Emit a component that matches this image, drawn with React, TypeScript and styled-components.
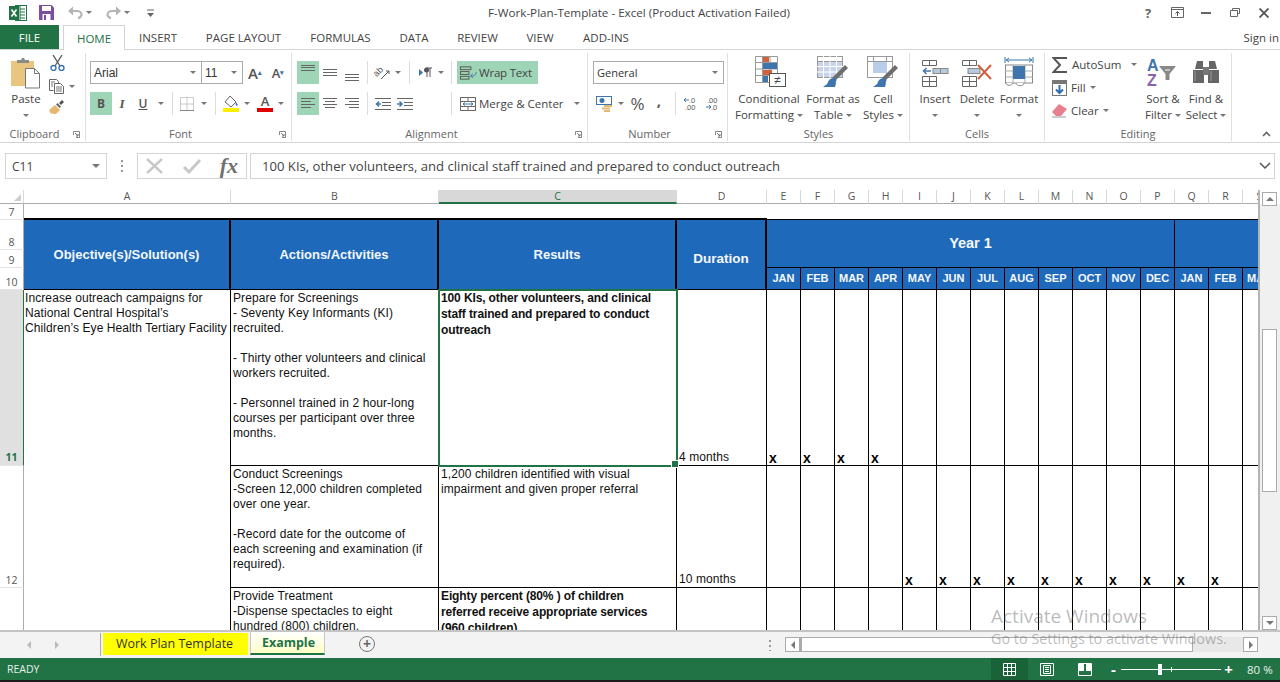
import React from "react";
import styled, { createGlobalStyle, css } from "styled-components";

const Global = createGlobalStyle`
  html, body { margin: 0; padding: 0; background: #fff; overflow: hidden; }
  * { box-sizing: border-box; }
  #root { width: 1280px; height: 682px; }
`;
const UI = `"Open Sans", "Noto Sans", sans-serif`;
const GREEN = "#217346";
const ACTIVE = "#9fd5b7";
const BLUE = "#1f69bb";

const Window = styled.div`
  position: relative; width: 1280px; height: 682px; display: flex; flex-direction: column;
  font-family: ${UI}; color: #444; background: #fff; overflow: hidden; white-space: nowrap;
`;
/* title */
const TitleBar = styled.div`height: 25px; display: flex; align-items: center; position: relative; flex: none;`;
const QuickBtn = styled.span<{ $w: number }>`width: ${p => p.$w}px; display: flex; justify-content: center; align-items: center; flex: none;`;
const HelpBtn = styled(QuickBtn)`font-weight: 700; font-size: 13px; color: #666;`;
const TitleText = styled.div`position: absolute; left: 0; right: 0; top: 5px; text-align: center; font-size: 11.65px; line-height: 16px; color: #444; padding-right: 2px;`;
const WinControls = styled.div`margin-left: auto; display: flex; align-items: center; padding-right: 2px;`;
/* tabs */
const TabBar = styled.div`height: 25px; display: flex; align-items: stretch; flex: none; border-bottom: 1px solid #d4d4d4; position: relative;`;
const FileTab = styled.div`width: 59px; background: ${GREEN}; color: #fff; font-size: 11.5px; display: flex; align-items: center; justify-content: center; margin-right: 4px;`;
const Tab = styled.div<{ $w: number; $active?: boolean }>`
  width: ${p => p.$w}px; font-size: 11.5px; display: flex; align-items: center; justify-content: center; color: #444; height: 25px;
  ${p => p.$active && css`color: ${GREEN}; background: #fff; border: 1px solid #d4d4d4; border-bottom: 0;`}
`;
const SignIn = styled.div`margin-left: auto; font-size: 11.5px; align-self: center; margin-right: 1px; color: #444;`;
/* ribbon */
const Ribbon = styled.div`height: 93px; flex: none; display: flex; padding-top: 3px; border-bottom: 1px solid #d4d4d4; background: #fff;`;
const Group = styled.div<{ $w: number; $last?: boolean }>`
  position: relative; flex: none; width: ${p => p.$w}px; height: 88px; display: flex; flex-direction: column;
  border-right: ${p => (p.$last ? "0" : "1px solid #e0e0e0")};
`;
const GroupBody = styled.div<{ $left?: number; $top?: number; $row?: boolean }>`
  flex: 1; display: flex; flex-direction: ${p => (p.$row ? "row" : "column")};
  padding: ${p => p.$top ?? 8}px 0 0 ${p => p.$left ?? 0}px; min-height: 0;
`;
const GroupLabel = styled.div<{ $launcher?: boolean }>`height: 14px; line-height: 14px; font-size: 11px; color: #666; text-align: center; padding-right: ${p => (p.$launcher ? 16 : 0)}px;`;
const CollapseRow = styled.div`height: 14px; display: flex; justify-content: flex-end; align-items: center; padding-right: 9px;`;
const Launcher = styled.svg`position: absolute; right: 5px; bottom: 3px; width: 7px; height: 7px;`;
const ToolRow = styled.div`display: flex; align-items: center; height: 23px; margin-bottom: 8px;`;
const Tool = styled.div<{ $w: number; $active?: boolean }>`
  flex: none; width: ${p => p.$w}px; height: 23px; display: flex; align-items: center; justify-content: center;
  background: ${p => (p.$active ? ACTIVE : "transparent")}; font-size: 12px; color: #555;
`;
const GrowFont = styled(Tool)<{ $size: number }>`font-size: ${p => p.$size}px; font-weight: 600; align-items: center;`;
const FontMark = styled.sup`font-size: 7px; color: #3f75ad; line-height: 7px;`;
const BoldTool = styled(Tool)`font-weight: 700;`;
const ItalicTool = styled(Tool)`font-style: italic; font-weight: 600; font-family: "Liberation Serif", serif; font-size: 13px;`;
const UnderTool = styled(Tool)`text-decoration: underline; font-weight: 600;`;
const ColorTool = styled(Tool)`flex-direction: column; font-weight: 600; font-size: 13px; line-height: 13px;`;
const PercentTool = styled(Tool)`font-size: 17px;`;
const CommaTool = styled(Tool)`font-weight: 700; font-size: 15px; padding-bottom: 8px;`;
const TextTool = styled(Tool)<{ $tight?: boolean }>`
  justify-content: flex-start; gap: ${p => (p.$tight ? 2 : 3)}px; padding-left: 3px; font-size: 11.5px; color: #444;
  letter-spacing: ${p => (p.$tight ? "-.2px" : "0")};
`;
const Sep = styled.div<{ $w: number }>`flex: none; width: ${p => p.$w}px; height: 23px; display: flex; justify-content: center; &::after { content: ""; width: 1px; background: #dcdcdc; }`;
const Gap = styled.div<{ $w: number }>`flex: none; width: ${p => p.$w}px;`;
const Caret = styled.span<{ $ml?: number; $big?: boolean }>`
  display: inline-block; flex: none; width: 0; height: 0; margin-left: ${p => p.$ml ?? 0}px;
  border-left: ${p => (p.$big ? 4 : 3)}px solid transparent; border-right: ${p => (p.$big ? 4 : 3)}px solid transparent; border-top: ${p => (p.$big ? 4 : 3)}px solid #777;
`;
const Combo = styled.div<{ $w: number; $ml?: number }>`
  flex: none; width: ${p => p.$w}px; margin-left: ${p => p.$ml ?? 0}px; height: 23px; border: 1px solid #ababab; background: #fff; display: flex; align-items: center;
  justify-content: space-between; padding: 0 5px 0 3px; font-size: 11px; color: #333;
`;
const ArialName = styled.span`font-family: "Liberation Sans", Arial, sans-serif; font-size: 12px;`;
const Big = styled.div<{ $w: number }>`flex: none; width: ${p => p.$w}px; display: flex; flex-direction: column; align-items: center;`;
const BigIcon = styled.div<{ $top?: number; $left?: number }>`height: 35px; display: flex; align-items: flex-start; justify-content: center; padding: ${p => p.$top ?? 0}px 0 0 ${p => p.$left ?? 0}px;`;
const BigLine = styled.div`height: 16px; line-height: 16px; font-size: 11.5px; color: #444; display: flex; align-items: center; gap: 3px; justify-content: center;`;
const SmallCol = styled.div<{ $w: number; $ml?: number; $mt?: number }>`flex: none; width: ${p => p.$w}px; margin: ${p => p.$mt ?? 0}px 0 0 ${p => p.$ml ?? 0}px; display: flex; flex-direction: column;`;
const SmallRow = styled.div<{ $h: number; $pt?: number; $pl?: number }>`height: ${p => p.$h}px; display: flex; align-items: center; gap: 4px; font-size: 11.5px; color: #444; padding: ${p => p.$pt ?? 0}px 0 0 ${p => p.$pl ?? 0}px;`;
/* formula */
const FormulaBar = styled.div`height: 47px; flex: none; display: flex; padding-top: 10px; align-items: flex-start; background: #fff;`;
const Box = styled.div<{ $w: number; $ml: number }>`
  flex: none; width: ${p => p.$w}px; margin-left: ${p => p.$ml}px; height: 26px; border: 1px solid #d4d4d4; display: flex; align-items: center; font-size: 12px; color: #444;
`;
const NameBox = styled(Box)`justify-content: space-between; padding: 0 6px;`;
const FxBox = styled(Box)`justify-content: space-between; padding: 0 8px 0 8px;`;
const FormulaBox = styled(Box)`justify-content: space-between; padding: 0 3px 0 11px; font-size: 13.1px;`;
const DragDots = styled.div`flex: none; margin-left: 14px; width: 2px; height: 13px; margin-top: 7px; background: repeating-linear-gradient(#999 0 2px, transparent 2px 5px);`;
const Fx = styled.span`font-family: "Liberation Serif", serif; font-style: italic; font-weight: 700; font-size: 22px; line-height: 22px; color: #707070;`;
/* sheet */
const SheetArea = styled.div`height: 440px; flex: none; display: flex;`;
const SheetClip = styled.div`width: 1258px; height: 440px; overflow: hidden; flex: none;`;
const SheetGrid = styled.div`
  display: grid; width: 1277px; height: 440px;
  grid-template-columns: 24px 207px 208px 238px 90px repeat(15, 34px);
  grid-template-rows: 14px 16px 30px 18px 22px 176px 122px 100px;
  font-family: "Liberation Sans", Arial, sans-serif; font-size: 12px; line-height: 15px; color: #111;
`;
type Pos = { $c: number; $r: number; $cs?: number; $rs?: number };
const place = css<Pos>`
  grid-column: ${p => p.$c} / span ${p => p.$cs ?? 1};
  grid-row: ${p => p.$r} / span ${p => p.$rs ?? 1};
`;
const ColHead = styled.div<Pos & { $sel?: boolean }>`
  ${place}; font-family: ${UI}; font-size: 10.5px; line-height: 13px; text-align: center; color: ${p => (p.$sel ? GREEN : "#555")};
  background: ${p => (p.$sel ? "#d8d8d8" : "#fff")}; border-right: 1px solid #d8d8d8;
  border-bottom: ${p => (p.$sel ? `2px solid ${GREEN}` : "1px solid #ababab")};
`;
const Corner = styled.div`grid-column: 1; grid-row: 1; border-bottom: 1px solid #ababab; border-right: 1px solid #d8d8d8; display: flex; justify-content: flex-end; align-items: flex-end; padding: 0 2px 2px 0;`;
const RowHead = styled.div<Pos & { $sel?: boolean }>`
  ${place}; font-family: ${UI}; font-size: 10.5px; line-height: 14px; text-align: center; display: flex; align-items: flex-end; justify-content: center;
  padding-bottom: ${p => (p.$sel ? 1 : 0)}px;
  background: ${p => (p.$sel ? "#e0e0e0" : "#fff")}; color: ${p => (p.$sel ? GREEN : "#555")}; font-weight: ${p => (p.$sel ? 700 : 400)};
  border-right: 1px solid ${p => (p.$sel ? GREEN : "#ababab")}; border-bottom: 1px solid #e4e4e4;
`;
const Blank = styled.div<Pos>`${place}; background: #fff; border-bottom: 2px solid #000;`;
const ThinBlank = styled.div<Pos>`${place}; background: #fff; border-bottom: 1px solid #000;`;
const HeadCell = styled.div<Pos & { $size?: number; $thick?: boolean; $low?: boolean }>`
  ${place}; background: ${BLUE}; color: #f4f8fc; font-weight: 700; font-size: ${p => p.$size ?? 13}px;
  display: flex; align-items: center; justify-content: center; overflow: hidden; padding-top: ${p => (p.$low ? 8 : 0)}px;
  border-right: ${p => (p.$thick ? "2px" : "1px")} solid #000; border-bottom: 1px solid #000;
`;
const Cell = styled.div<Pos & { $bold?: boolean; $bottom?: boolean; $selected?: boolean; $first?: boolean }>`
  ${place}; position: relative; background: #fff; white-space: pre; overflow: hidden;
  padding: ${p => (p.$bold || p.$bottom ? 0 : 1)}px 2px 0 ${p => (p.$first ? 1 : 2)}px;
  border-right: 1px solid #000; border-bottom: 1px solid #000;
  font-weight: ${p => (p.$bold ? 700 : 400)}; line-height: ${p => (p.$bold ? 16 : 15)}px;
  letter-spacing: ${p => (p.$bold ? "-.12px" : ".09px")};
  ${p => p.$bottom && css`display: flex; align-items: flex-end;`}
  ${p => p.$selected && css`overflow: visible; z-index: 2; outline: 2px solid ${GREEN}; outline-offset: -1px;
    &::after { content: ""; position: absolute; right: -3px; bottom: -3px; width: 6px; height: 6px; background: ${GREEN}; border: 1px solid #fff; }`}
`;
const Mark = styled.span`font-weight: 700; font-size: 14px; line-height: 14px; color: #000;`;
/* scrollbars */
const VScroll = styled.div`width: 22px; height: 440px; flex: none; border-left: 2px solid #b4b4b4; background: linear-gradient(#fff 0 14px, #f0f0f0 14px); display: flex; flex-direction: column; align-items: center; padding: 2px 1px 0 0; position: relative;`;
const ScrollBtn = styled.div<{ $w?: number; $h?: number; $end?: boolean }>`flex: none; width: ${p => p.$w ?? 15}px; height: ${p => p.$h ?? 15}px; margin-top: ${p => (p.$end ? "auto" : "0")}; background: #fff; border: 1px solid #ababab; display: flex; align-items: center; justify-content: center;`;
const VThumb = styled.div`flex: none; width: 15px; height: 163px; margin-top: 123px; background: #fff; border: 1px solid #ababab;`;
const Tri = styled.span<{ $dir: "up" | "down" | "left" | "right" }>`
  width: 0; height: 0; display: inline-block; flex: none;
  ${p => p.$dir === "up" && "border-left: 4px solid transparent; border-right: 4px solid transparent; border-bottom: 4px solid #777;"}
  ${p => p.$dir === "down" && "border-left: 4px solid transparent; border-right: 4px solid transparent; border-top: 4px solid #777;"}
  ${p => p.$dir === "left" && "border-top: 4px solid transparent; border-bottom: 4px solid transparent; border-right: 4px solid #777;"}
  ${p => p.$dir === "right" && "border-top: 4px solid transparent; border-bottom: 4px solid transparent; border-left: 4px solid #777;"}
`;
/* sheet tabs */
const TabsRow = styled.div`height: 28px; flex: none; background: #f3f3f3; border-top: 2px solid #c4c4c4; display: flex; align-items: flex-start; position: relative;`;
const NavArrow = styled.span<{ $w: number; $ml?: number }>`flex: none; width: ${p => p.$w}px; margin-left: ${p => p.$ml ?? 0}px; height: 26px; display: flex; align-items: center; justify-content: center; opacity: .45;`;
const TabSep = styled.div`flex: none; width: 1px; height: 23px; background: #aaa; margin: 1px 2px 0 0;`;
const YellowTab = styled.div`flex: none; width: 145px; height: 22px; margin-top: 1px; padding: 0 2px 2px 0; background: #ffff00; display: flex; align-items: center; justify-content: center; font-size: 12.5px; color: #333; margin-right: 2px;`;
const ActiveTab = styled.div`flex: none; width: 75px; height: 23px; background: linear-gradient(#fff, #ffffc4); display: flex; align-items: center; justify-content: center; padding-left: 2px; font-size: 12.5px; font-weight: 700; color: ${GREEN}; border: 1px solid #c8c8c8; border-top: 0; border-bottom: 2px solid ${GREEN};`;
const AddSheet = styled.div`flex: none; width: 16px; height: 16px; margin: 4px 0 0 34px; border-radius: 50%; border: 1.5px solid #777; display: flex; align-items: center; justify-content: center; font-size: 14px; line-height: 12px; color: #666; font-weight: 700;`;
const HScrollDots = styled.div`flex: none; width: 2px; height: 11px; margin: 8px 14px 0 auto; background: repeating-linear-gradient(#999 0 2px, transparent 2px 5px);`;
const HScroll = styled.div`flex: none; width: 473px; height: 15px; margin: 5px 22px 0 0; display: flex; background: #e8e8e8;`;
const HThumb = styled.div`flex: none; width: 393px; height: 15px; background: #fff; border: 1px solid #ababab; border-left-width: 2px;`;
const HTrack = styled.div`flex: 1;`;
/* status */
const Status = styled.div`height: 22px; flex: none; background: ${GREEN}; color: #e8f1ec; display: flex; align-items: stretch; font-size: 10.5px;`;
const Ready = styled.div`padding-left: 7px; display: flex; align-items: center; width: 991px; flex: none;`;
const ViewBtn = styled.div<{ $w: number; $active?: boolean }>`flex: none; width: ${p => p.$w}px; display: flex; align-items: center; justify-content: center; background: ${p => (p.$active ? "#1a6238" : "transparent")};`;
const ZoomPart = styled.div`flex: 1; display: flex; align-items: center; padding-left: 5px; gap: 3px;`;
const ZoomTrack = styled.div`width: 100px; height: 1px; background: #fff; position: relative; flex: none;
  &::before { content: ""; position: absolute; left: 37px; top: -5px; width: 4px; height: 11px; background: #fff; }
  &::after { content: ""; position: absolute; left: 50px; top: -2px; width: 1px; height: 5px; background: #fff; }`;
const ZoomSign = styled.span`font-size: 15px; font-weight: 700; width: 9px; text-align: center; color: #fff; line-height: 14px;`;
const Percent = styled.span`font-size: 11.5px; margin-left: 11px; color: #e8f1ec;`;
const BottomStrip = styled.div`height: 2px; flex: none; background: #1a1a18;`;
/* watermark */
const Watermark = styled.div`position: absolute; left: 991px; top: 604px; z-index: 5; color: rgba(90, 90, 90, .42); pointer-events: none;`;
const WmTitle = styled.div`font-size: 19px; line-height: 24px;`;
const WmSub = styled.div`font-size: 14.4px; line-height: 21px;`;
const ColorBar = styled.span`width: 16px; height: 4px; background: #e00000; display: block;`;
const Flip = styled.span`display: flex; transform: scaleX(-1);`;

/* ---------- icons ---------- */
const ExcelLogo = () => (
  <svg width="18" height="18" viewBox="0 0 18 18">
    <rect x="6.5" y="1.5" width="11" height="15" fill="#fff" stroke={GREEN} />
    <path d="M11 5h5M11 8h5M11 11h5M11 14h5M11 2v14" stroke={GREEN} fill="none" />
    <rect x="0" y="2" width="10" height="14" fill={GREEN} />
    <path d="M2.5 5.5l5 7M7.5 5.5l-5 7" stroke="#fff" strokeWidth="1.6" />
  </svg>
);
const SaveIcon = () => (
  <svg width="15" height="15" viewBox="0 0 15 15">
    <path d="M0 0h12.5L15 2.5V15H0z" fill="#7b4f9d" />
    <rect x="3" y="1" width="9" height="5" fill="#fff" />
    <rect x="3.5" y="9" width="8" height="6" fill="#fff" />
    <rect x="5" y="10" width="2" height="5" fill="#7b4f9d" />
  </svg>
);
const Undo = () => (
  <svg width="15" height="13" viewBox="0 0 15 13">
    <path d="M1 5h8c3 0 4.500 2 4.500 3.500S12 12 10 12" stroke="#b4b4b4" strokeWidth="2.200" fill="none" />
    <path d="M0 5l5-4.500v9z" fill="#b4b4b4" />
  </svg>
);
const Customize = () => (
  <svg width="7" height="8" viewBox="0 0 7 8"><path d="M0 1h7" stroke="#666" /><path d="M0 4h7L3.500 8z" fill="#666" /></svg>
);
const Launch = () => (
  <Launcher viewBox="0 0 7 7"><path d="M.5 4V.5H6.500V6.500H3" stroke="#888" fill="none" /><path d="M2 2l3 3M5 3v2H3" stroke="#777" fill="none" /></Launcher>
);
const Paste = () => (
  <svg width="32" height="32" viewBox="0 0 32 32">
    <rect x="1" y="4" width="23" height="25" fill="#e8c67f" />
    <path d="M7 5V3h4l1-2h2l1 2h4v3H7z" fill="#8a8a8a" />
    <path d="M15.500 11.500h9l5 5V31h-14z" fill="#fff" stroke="#777" />
    <path d="M24.500 11.500v5h5" fill="none" stroke="#777" />
  </svg>
);
const Cut = () => (
  <svg width="15" height="16" viewBox="0 0 15 16">
    <path d="M3 0l7 11M12 0L5 11" stroke="#555" strokeWidth="1.300" />
    <circle cx="3.500" cy="13" r="2.500" fill="none" stroke="#3f75ad" strokeWidth="1.400" />
    <circle cx="11.500" cy="13" r="2.500" fill="none" stroke="#3f75ad" strokeWidth="1.400" />
  </svg>
);
const Copy = () => (
  <svg width="16" height="15" viewBox="0 0 16 15">
    <path d="M.5 11.500V.5h7l2 2v2" fill="#fff" stroke="#666" /><path d="M.5 11.500h4" stroke="#666" />
    <path d="M5.500 4.500h6l3 3v7h-9z" fill="#fff" stroke="#666" />
    <path d="M7 8h6M7 10h6M7 12h6M2 3h4M2 5h2M2 7h2" stroke="#777" />
  </svg>
);
const Painter = () => (
  <svg width="17" height="15" viewBox="0 0 17 15">
    <path d="M0 10l6-5 5 5-4 4H4l-.5-1L2 14z" fill="#e4b96f" />
    <path d="M7 4.500l3.500 3.500 1.500-1.500L8.500 3z" fill="#666" />
    <path d="M10 3l3-3 2 2-3 3z" fill="#555" />
  </svg>
);
const Lines = ({ rows, color = "#666" }: { rows: [number, number, number][]; color?: string }) => (
  <svg width="22" height="23" viewBox="0 0 22 23">
    {rows.map(([a, b, y], i) => <path key={i} d={`M${a} ${y + .5}H${b}`} stroke={color} />)}
  </svg>
);
const Orient = () => (
  <svg width="18" height="16" viewBox="0 0 18 16">
    <path d="M8 14l8-8M16 6h-3M16 6v3" stroke="#555" fill="none" />
    <text x="1" y="10" fontSize="9" fill="#555" fontFamily="Liberation Sans" transform="rotate(-45 5 8)">ab</text>
  </svg>
);
const Rtl = () => (
  <svg width="14" height="11" viewBox="0 0 14 11">
    <path d="M0 2l4 3.500L0 9z" fill="#3f75ad" />
    <path d="M7 1h6M8 1v9M11 1v9" stroke="#555" /><circle cx="7.500" cy="3" r="2.500" fill="#555" />
  </svg>
);
const Indent = ({ out }: { out?: boolean }) => (
  <svg width="16" height="12" viewBox="0 0 16 12">
    <path d="M0 .5h16M7 4.500h9M7 7.500h9M0 11.500h16" stroke="#666" />
    {out ? <path d="M6 6H1.500M4 3.500L1.500 6 4 8.500" stroke="#3f75ad" strokeWidth="1.500" fill="none" />
      : <path d="M0 6h4.500M2.500 3.500L5 6 2.500 8.500" stroke="#3f75ad" strokeWidth="1.500" fill="none" />}
  </svg>
);
const WrapIcon = () => (
  <svg width="17" height="14" viewBox="0 0 18 14">
    <rect x=".5" y=".5" width="11" height="3" fill="none" stroke="#555" />
    <rect x=".5" y="5.500" width="9" height="3" fill="none" stroke="#555" />
    <rect x=".5" y="10.500" width="9" height="3" fill="none" stroke="#555" />
    <path d="M11 10c4 1 6-1 6-4M11 10l2.500-2M11 10l2.500 2" stroke="#3f75ad" fill="none" />
  </svg>
);
const MergeIcon = () => (
  <svg width="16" height="14" viewBox="0 0 16 14">
    <rect x=".5" y=".5" width="15" height="13" fill="none" stroke="#666" />
    <path d="M0 4.500h16M0 9.500h16M8 0v4M8 10v4" stroke="#666" />
    <path d="M3 7h10M3 7l2-1.500M3 7l2 1.500M13 7l-2-1.500M13 7l-2 1.500" stroke="#3f75ad" fill="none" />
  </svg>
);
const BordersIcon = () => (
  <svg width="14" height="14" viewBox="0 0 14 14">
    <path d="M.5.5h13v13H.5zM7 .5v13M.5 7h13" fill="none" stroke="#999" strokeDasharray="1 1" />
    <path d="M0 13.500h14" stroke="#888" />
  </svg>
);
const FillIcon = () => (
  <svg width="18" height="19" viewBox="0 0 18 19">
    <path d="M3 8l5-6 6 6-5 5z" fill="#fff" stroke="#666" /><path d="M14 8l2 3-1.500 1-1-2z" fill="#3f75ad" />
    <rect x="1" y="14" width="16" height="4" fill="#ffee00" />
  </svg>
);
const AccountIcon = () => (
  <svg width="17" height="16" viewBox="0 0 17 16">
    <rect x=".5" y=".5" width="15" height="8" fill="#fff" stroke="#3f75ad" />
    <circle cx="6" cy="4.500" r="2.500" fill="#3f75ad" />
    <rect x="8" y="9" width="8" height="2" fill="#e4b96f" /><rect x="6" y="11.500" width="8" height="2" fill="#e4b96f" /><rect x="8" y="14" width="6" height="2" fill="#e4b96f" />
  </svg>
);
const DecIcon = ({ more }: { more?: boolean }) => (
  <svg width="18" height="15" viewBox="0 0 18 15">
    <text x={more ? 6 : 2} y="6.500" fontSize="7.500" fill="#555" fontFamily="Liberation Sans">{more ? ".0" : ".00"}</text>
    <text x={more ? 2 : 6} y="14" fontSize="7.500" fill="#555" fontFamily="Liberation Sans">{more ? ".00" : ".0"}</text>
    {more ? <path d="M6 4H1M3 2L1 4l2 2" stroke="#3f75ad" fill="none" /> : <path d="M1 11h5M4 9l2 2-2 2" stroke="#3f75ad" fill="none" />}
  </svg>
);
const CondFmt = () => (
  <svg width="32" height="32" viewBox="0 0 32 32">
    <path d="M.5.5h22v26H.5zM.5 6.500h22M.5 13h22M.5 19.500h22M7.500 0v27M15 0v27" fill="#fff" stroke="#999" />
    <rect x="8" y="1" width="6" height="5" fill="#d2603a" /><rect x="8" y="7" width="14" height="6" fill="#3f75ad" />
    <rect x="8" y="14" width="9" height="5" fill="#d2603a" /><rect x="8" y="20" width="5" height="6" fill="#3f75ad" />
    <rect x="14.500" y="17.500" width="16" height="13" fill="#fff" stroke="#555" />
    <text x="22.500" y="28" fontSize="12" textAnchor="middle" fill="#444" fontFamily="Liberation Sans">≠</text>
  </svg>
);
const Brush = () => (
  <g>
    <path d="M15 22l13-13 3 3-13 13z" fill="#6d6d6d" />
    <path d="M10 31c0-6 3-9 7-9 2 0 3 2 2 4s-4 5-9 5z" fill="#3f75ad" />
    <path d="M6 31h12l1-4-6-1z" fill="#3f75ad" />
  </g>
);
const TableFmt = () => (
  <svg width="32" height="32" viewBox="0 0 32 32">
    <rect x=".5" y=".5" width="25" height="21" fill="#c9d4e8" stroke="#999" />
    <rect x=".5" y=".5" width="25" height="5" fill="#fff" stroke="#999" />
    <path d="M6.500 0v22M13 0v22M19.500 0v22M0 10.500h26M0 16h26" stroke="#fff" /><Brush />
  </svg>
);
const CellFmt = () => (
  <svg width="32" height="32" viewBox="0 0 32 32">
    <rect x=".5" y=".5" width="25" height="21" fill="#fff" stroke="#999" />
    <path d="M0 5.500h26M6.500 0v6M19.500 0v22" stroke="#999" />
    <rect x="6" y="6" width="14" height="11" fill="#b9cde8" /><Brush />
  </svg>
);
const InsertIcon = () => (
  <svg width="28" height="30" viewBox="0 0 28 30">
    <path d="M1.500 1.500h14v5h-14zM8.500 1.500v5M1.500 17.500h14v10h-14zM8.500 17.500v10M1.500 22.500h14" fill="none" stroke="#666" />
    <rect x="12" y="9.500" width="15" height="5" fill="#b9c9dc" stroke="#888" /><path d="M19.500 9.500v5" stroke="#888" />
    <path d="M10 12H2.500M5.500 9l-3 3 3 3" stroke="#3f75ad" strokeWidth="1.500" fill="none" />
  </svg>
);
const DeleteIcon = () => (
  <svg width="32" height="30" viewBox="0 0 32 30">
    <path d="M1.500 1.500h14v5h-14zM8.500 1.500v5M1.500 17.500h14v10h-14zM8.500 17.500v10M1.500 22.500h14" fill="none" stroke="#666" />
    <rect x="7" y="9.500" width="12" height="5" fill="#b9c9dc" stroke="#888" />
    <path d="M17 6l13 14M30 6L17 20" stroke="#d2603a" strokeWidth="2" />
  </svg>
);
const FormatIcon = () => (
  <svg width="30" height="32" viewBox="0 0 30 32">
    <path d="M1 1v6M29 1v6M2 4h26M2 4l3-2M2 4l3 2M28 4l-3-2M28 4l-3 2" stroke="#3f75ad" fill="none" />
    <rect x="1.500" y="9" width="27" height="18" fill="#fff" stroke="#888" />
    <path d="M9 9v18M21 9v18M1 15h28M1 21h28" stroke="#aaa" />
    <rect x="9" y="10" width="12" height="13" fill="#3f75ad" />
    <path d="M2 27c0 3 6 3 7 0M12 27c0 3 8 4 8 0" stroke="#888" fill="#fff" />
  </svg>
);
const SigmaIcon = () => (
  <svg width="16" height="16" viewBox="0 0 16 16"><path d="M15 1H1.500L8 8l-6.500 7H15" fill="none" stroke="#555" strokeWidth="2" /></svg>
);
const FillDown = () => (
  <svg width="15" height="16" viewBox="0 0 15 16">
    <rect x=".5" y=".5" width="14" height="15" fill="#fff" stroke="#777" /><rect x="0" y="0" width="15" height="4" fill="#777" />
    <path d="M7.500 5v8M4 9.500l3.500 3.500L11 9.500" fill="none" stroke="#2e6fb0" strokeWidth="2" />
  </svg>
);
const Eraser = () => (
  <svg width="15" height="15" viewBox="0 0 15 15">
    <path d="M0 9l7-8 8 5-6 7H4z" fill="#e77f8e" /><path d="M0 14h14" stroke="#999" />
  </svg>
);
const SortIcon = () => (
  <svg width="32" height="30" viewBox="0 0 32 30">
    <text x="0" y="13" fontSize="16" fontWeight="700" fill="#3f75ad" fontFamily="Liberation Sans">A</text>
    <text x="0" y="28" fontSize="16" fontWeight="700" fill="#8a64a8" fontFamily="Liberation Sans">Z</text>
    <path d="M12 8h17l-6.500 8v6h-4v-6z" fill="#888" /><path d="M18 12h5" stroke="#fff" />
  </svg>
);
const Binoculars = () => (
  <svg width="28" height="30" viewBox="0 0 28 30">
    <path d="M3 10l2-8h6v8zM17 10V2h6l2 8z" fill="#666" />
    <path d="M1 24V11h11v13zM16 24V11h11v13z" fill="#666" />
    <rect x="11" y="8" width="6" height="8" fill="#777" />
    <path d="M3 12v10M19 12v10" stroke="#999" />
  </svg>
);
const XMark = () => <svg width="18" height="16" viewBox="0 0 18 16"><path d="M1 1l15 14M16 1L1 15" stroke="#c8c8c8" strokeWidth="2.400" /></svg>;
const Check = () => <svg width="20" height="16" viewBox="0 0 20 16"><path d="M2 9l5 5L18 2" stroke="#c8c8c8" strokeWidth="3" fill="none" /></svg>;

const GridView = () => <svg width="13" height="13" viewBox="0 0 13 13"><path d="M.5.5h12v12H.5zM4.500 0v13M8.500 0v13M0 4.500h13M0 8.500h13" stroke="#fff" fill="none" /></svg>;
const PageView = () => <svg width="14" height="13" viewBox="0 0 14 13"><path d="M.5.5h13v12H.5z" stroke="#fff" fill="none" /><path d="M3.500 2.500h7v8h-7zM5 4.500h4M5 6.500h4M5 8.500h4" stroke="#fff" fill="none" /></svg>;
const BreakView = () => <svg width="14" height="13" viewBox="0 0 14 13"><path d="M.5.5h13v12H.5z" stroke="#fff" fill="none" /><rect x="1" y="1" width="5" height="7" fill="#fff" /><rect x="8" y="1" width="5" height="7" fill="#fff" /></svg>;

/* ---------- data ---------- */
const letters = "ABCDEFGHIJKLMNOPQRS".split("");
const months = ["JAN", "FEB", "MAR", "APR", "MAY", "JUN", "JUL", "AUG", "SEP", "OCT", "NOV", "DEC", "JAN", "FEB", "MAR"];
const rowHeads: [string, number][] = [["7", 2], ["8", 3], ["9", 4], ["10", 5], ["11", 6], ["12", 7], ["", 8]];
const timeCols = Array.from({ length: 15 }, (_, i) => i + 6);

const B11 = `Prepare for Screenings
- Seventy Key Informants (KI)
recruited.

- Thirty other volunteers and clinical
workers recruited.

- Personnel trained in 2 hour-long
courses per participant over three
months.`;
const B12 = `Conduct Screenings
-Screen 12,000 children completed
over one year.

-Record date for the outcome of
each screening and examination (if
required).`;

const Sheet = () => (
  <SheetGrid>
    <Corner><svg width="7" height="7" viewBox="0 0 7 7"><path d="M7 0v7H0z" fill="#cfcfcf" /></svg></Corner>
    {letters.map((l, i) => <ColHead key={l} $c={i + 2} $r={1} $sel={l === "C"}>{l}</ColHead>)}
    {rowHeads.map(([n, r]) => <RowHead key={r} $c={1} $r={r} $sel={n === "11"}>{n}</RowHead>)}
    <Blank $c={2} $r={2} $cs={4} />
    <ThinBlank $c={6} $r={2} $cs={15} />
    <HeadCell $c={2} $r={3} $rs={3} $thick>Objective(s)/Solution(s)</HeadCell>
    <HeadCell $c={3} $r={3} $rs={3} $thick>Actions/Activities</HeadCell>
    <HeadCell $c={4} $r={3} $rs={3} $thick>Results</HeadCell>
    <HeadCell $c={5} $r={3} $rs={3} $thick $low $size={13.5}>Duration</HeadCell>
    <HeadCell $c={6} $r={3} $rs={2} $cs={12} $size={14.5}>Year 1</HeadCell>
    <HeadCell $c={18} $r={3} $rs={2} $cs={3} />
    {months.map((m, i) => <HeadCell key={i} $c={i + 6} $r={5} $size={11}>{m}</HeadCell>)}
    <Cell $c={2} $r={6} $rs={3} $first>{`Increase outreach campaigns for
National Central Hospital’s
Children’s Eye Health Tertiary Facility`}</Cell>
    <Cell $c={3} $r={6}>{B11}</Cell>
    <Cell $c={4} $r={6} $bold $selected>{`100 KIs, other volunteers, and clinical
staff trained and prepared to conduct
outreach`}</Cell>
    <Cell $c={5} $r={6} $bottom>4 months</Cell>
    {timeCols.map((c, i) => <Cell key={c} $c={c} $r={6} $bottom>{i < 4 ? <Mark>x</Mark> : null}</Cell>)}
    <Cell $c={3} $r={7}>{B12}</Cell>
    <Cell $c={4} $r={7}>{`1,200 children identified with visual
impairment and given proper referral`}</Cell>
    <Cell $c={5} $r={7} $bottom>10 months</Cell>
    {timeCols.map((c, i) => <Cell key={c} $c={c} $r={7} $bottom>{i >= 4 && i < 14 ? <Mark>x</Mark> : null}</Cell>)}
    <Cell $c={3} $r={8}>{`Provide Treatment
-Dispense spectacles to eight
hundred (800) children.`}</Cell>
    <Cell $c={4} $r={8} $bold>{`Eighty percent (80% ) of children
referred receive appropriate services
(960 children)`}</Cell>
    <Cell $c={5} $r={8} />
    {timeCols.map(c => <Cell key={c} $c={c} $r={8} />)}
  </SheetGrid>
);

export default function App() {
  return (
    <Window>
      <Global />
      <TitleBar>
        <Gap $w={8} />
        <QuickBtn $w={19}><ExcelLogo /></QuickBtn>
        <Gap $w={10} />
        <QuickBtn $w={19}><SaveIcon /></QuickBtn>
        <Gap $w={10} />
        <QuickBtn $w={18}><Undo /></QuickBtn>
        <QuickBtn $w={10}><Caret /></QuickBtn>
        <Gap $w={10} />
        <QuickBtn $w={18}><Flip><Undo /></Flip></QuickBtn>
        <QuickBtn $w={10}><Caret /></QuickBtn>
        <Gap $w={11} />
        <QuickBtn $w={14}><Customize /></QuickBtn>
        <TitleText>F-Work-Plan-Template - Excel (Product Activation Failed)</TitleText>
        <WinControls>
          <HelpBtn $w={28}>?</HelpBtn>
          <QuickBtn $w={30}><svg width="13" height="11" viewBox="0 0 13 11"><path d="M.5.5h12v10H.5zM0 2.500h13" stroke="#666" fill="none" /><path d="M6.500 9V4.500M4.500 6.500l2-2 2 2" stroke="#555" fill="none" /></svg></QuickBtn>
          <QuickBtn $w={28}><svg width="10" height="3" viewBox="0 0 10 3"><rect width="10" height="2" y="1" fill="#666" /></svg></QuickBtn>
          <QuickBtn $w={30}><svg width="10" height="9" viewBox="0 0 10 9"><path d="M2.500 2V.5h7v5H8M.5 2.500h7v6h-7z" stroke="#666" fill="none" /></svg></QuickBtn>
          <QuickBtn $w={28}><svg width="10" height="10" viewBox="0 0 10 10"><path d="M.5.5l9 9M9.500.5l-9 9" stroke="#555" strokeWidth="1.800" /></svg></QuickBtn>
        </WinControls>
      </TitleBar>
      <TabBar>
        <FileTab>FILE</FileTab>
        <Tab $w={62} $active>HOME</Tab>
        <Tab $w={66}>INSERT</Tab>
        <Tab $w={105}>PAGE LAYOUT</Tab>
        <Tab $w={89}>FORMULAS</Tab>
        <Tab $w={58}>DATA</Tab>
        <Tab $w={69}>REVIEW</Tab>
        <Tab $w={56}>VIEW</Tab>
        <Tab $w={76}>ADD-INS</Tab>
        <SignIn>Sign in</SignIn>
      </TabBar>
      <Ribbon>
        <Group $w={86}>
          <GroupBody $row $left={6} $top={3}>
            <Big $w={40}>
              <BigIcon $top={1}><Paste /></BigIcon>
              <BigLine>Paste</BigLine>
              <BigLine><Caret /></BigLine>
            </Big>
            <SmallCol $w={36} $ml={3} $mt={-1}>
              <SmallRow $h={16} $pl={1}><Cut /></SmallRow>
              <SmallRow $h={26} $pt={5}><Copy /><Caret /></SmallRow>
              <SmallRow $h={18} $pt={3}><Painter /></SmallRow>
            </SmallCol>
          </GroupBody>
          <GroupLabel $launcher>Clipboard</GroupLabel><Launch />
        </Group>
        <Group $w={206}>
          <GroupBody $left={4}>
            <ToolRow>
              <Combo $w={112}><ArialName>Arial</ArialName><Caret /></Combo>
              <Combo $w={42} $ml={-1}><ArialName>11</ArialName><Caret /></Combo>
              <GrowFont $w={24} $size={15}>A<FontMark>▴</FontMark></GrowFont>
              <GrowFont $w={22} $size={13}>A<FontMark>▾</FontMark></GrowFont>
            </ToolRow>
            <ToolRow>
              <BoldTool $w={22} $active>B</BoldTool>
              <ItalicTool $w={20}>I</ItalicTool>
              <UnderTool $w={22}>U</UnderTool>
              <Tool $w={14}><Caret /></Tool>
              <Sep $w={8} />
              <Tool $w={22}><BordersIcon /></Tool>
              <Tool $w={12}><Caret /></Tool>
              <Sep $w={10} />
              <Tool $w={22}><FillIcon /></Tool>
              <Tool $w={10}><Caret /></Tool>
              <ColorTool $w={26}>A<ColorBar /></ColorTool>
              <Tool $w={6}><Caret /></Tool>
            </ToolRow>
          </GroupBody>
          <GroupLabel $launcher>Font</GroupLabel><Launch />
        </Group>
        <Group $w={296}>
          <GroupBody $left={5}>
            <ToolRow>
              <Tool $w={22} $active><Lines rows={[[4, 18, 4], [4, 18, 6], [4, 18, 9]]} /></Tool>
              <Tool $w={22}><Lines rows={[[4, 18, 8], [4, 18, 11], [4, 18, 14]]} /></Tool>
              <Tool $w={22}><Lines rows={[[4, 18, 13], [4, 18, 16], [4, 18, 19]]} /></Tool>
              <Sep $w={8} />
              <Tool $w={22}><Orient /></Tool>
              <Tool $w={9}><Caret /></Tool>
              <Sep $w={14} />
              <Tool $w={20}><Rtl /></Tool>
              <Tool $w={10}><Caret /></Tool>
              <Sep $w={11} />
              <TextTool $w={81} $active $tight><WrapIcon />Wrap Text</TextTool>
            </ToolRow>
            <ToolRow>
              <Tool $w={22} $active><Lines rows={[[4, 18, 6], [4, 14, 9], [4, 18, 12], [4, 14, 15]]} /></Tool>
              <Tool $w={22}><Lines rows={[[4, 18, 6], [6, 16, 9], [4, 18, 12], [6, 16, 15]]} /></Tool>
              <Tool $w={22}><Lines rows={[[4, 18, 6], [8, 18, 9], [4, 18, 12], [8, 18, 15]]} /></Tool>
              <Sep $w={8} />
              <Tool $w={23}><Indent out /></Tool>
              <Tool $w={22}><Indent /></Tool>
              <Gap $w={30} />
              <Sep $w={11} />
              <TextTool $w={125}><MergeIcon />Merge &amp; Center<Caret $ml={7} /></TextTool>
            </ToolRow>
          </GroupBody>
          <GroupLabel $launcher>Alignment</GroupLabel><Launch />
        </Group>
        <Group $w={140}>
          <GroupBody $left={5}>
            <ToolRow><Combo $w={131}><span>General</span><Caret /></Combo></ToolRow>
            <ToolRow>
              <Tool $w={22}><AccountIcon /></Tool>
              <Tool $w={11}><Caret /></Tool>
              <PercentTool $w={23}>%</PercentTool>
              <CommaTool $w={20}>,</CommaTool>
              <Sep $w={12} />
              <Tool $w={22}><DecIcon more /></Tool>
              <Tool $w={21}><DecIcon /></Tool>
            </ToolRow>
          </GroupBody>
          <GroupLabel $launcher>Number</GroupLabel><Launch />
        </Group>
        <Group $w={182}>
          <GroupBody $row $left={6} $top={3}>
            <Big $w={70}><BigIcon $left={3}><CondFmt /></BigIcon><BigLine>Conditional</BigLine><BigLine>Formatting<Caret /></BigLine></Big>
            <Big $w={58}><BigIcon><TableFmt /></BigIcon><BigLine>Format as</BigLine><BigLine>Table<Caret /></BigLine></Big>
            <Big $w={42}><BigIcon><CellFmt /></BigIcon><BigLine>Cell</BigLine><BigLine>Styles<Caret /></BigLine></Big>
          </GroupBody>
          <GroupLabel>Styles</GroupLabel>
        </Group>
        <Group $w={135}>
          <GroupBody $row $left={6} $top={3}>
            <Big $w={38}><BigIcon $top={3}><InsertIcon /></BigIcon><BigLine>Insert</BigLine><BigLine><Caret /></BigLine></Big>
            <Big $w={46}><BigIcon $top={3}><DeleteIcon /></BigIcon><BigLine>Delete</BigLine><BigLine><Caret /></BigLine></Big>
            <Big $w={38}><BigIcon><FormatIcon /></BigIcon><BigLine>Format</BigLine><BigLine><Caret /></BigLine></Big>
          </GroupBody>
          <GroupLabel>Cells</GroupLabel>
        </Group>
        <Group $w={187}>
          <GroupBody $row $left={7} $top={3}>
            <SmallCol $w={93} $mt={-3}>
              <SmallRow $h={23}><SigmaIcon />AutoSum<Caret $ml={6} /></SmallRow>
              <SmallRow $h={23}><FillDown />Fill<Caret /></SmallRow>
              <SmallRow $h={23}><Eraser />Clear<Caret /></SmallRow>
            </SmallCol>
            <Big $w={36}><BigIcon $top={2}><SortIcon /></BigIcon><BigLine>Sort &amp;</BigLine><BigLine>Filter<Caret /></BigLine></Big>
            <Big $w={50}><BigIcon $top={3}><Binoculars /></BigIcon><BigLine>Find &amp;</BigLine><BigLine>Select<Caret /></BigLine></Big>
          </GroupBody>
          <GroupLabel>Editing</GroupLabel>
        </Group>
        <Group $w={48} $last>
          <GroupBody />
          <CollapseRow>
            <svg width="9" height="6" viewBox="0 0 9 6"><path d="M1 5l3.500-3.500L8 5" stroke="#666" strokeWidth="1.600" fill="none" /></svg>
          </CollapseRow>
        </Group>
      </Ribbon>
      <FormulaBar>
        <NameBox $w={102} $ml={5}>C11<Caret $big /></NameBox>
        <DragDots />
        <FxBox $w={110} $ml={14}><XMark /><Check /><Fx>fx</Fx></FxBox>
        <FormulaBox $w={1025} $ml={3}>
          100 KIs, other volunteers, and clinical staff trained and prepared to conduct outreach
          <svg width="12" height="8" viewBox="0 0 12 8"><path d="M1 1l5 5 5-5" stroke="#555" strokeWidth="1.500" fill="none" /></svg>
        </FormulaBox>
      </FormulaBar>
      <SheetArea>
        <SheetClip><Sheet /></SheetClip>
        <VScroll>
          <ScrollBtn $h={14}><Tri $dir="up" /></ScrollBtn>
          <VThumb />
          <ScrollBtn $h={14} $end><Tri $dir="down" /></ScrollBtn>
        </VScroll>
      </SheetArea>
      <TabsRow>
        <NavArrow $w={28} $ml={15}><Tri $dir="left" /></NavArrow>
        <NavArrow $w={28}><Tri $dir="right" /></NavArrow>
        <Gap $w={29} />
        <TabSep />
        <YellowTab>Work Plan Template</YellowTab>
        <ActiveTab>Example</ActiveTab>
        <AddSheet>+</AddSheet>
        <HScrollDots />
        <HScroll>
          <ScrollBtn><Tri $dir="left" /></ScrollBtn>
          <HThumb />
          <HTrack />
          <ScrollBtn><Tri $dir="right" /></ScrollBtn>
        </HScroll>
      </TabsRow>
      <Status>
        <Ready>READY</Ready>
        <ViewBtn $w={37} $active><GridView /></ViewBtn>
        <ViewBtn $w={38}><PageView /></ViewBtn>
        <ViewBtn $w={38}><BreakView /></ViewBtn>
        <ZoomPart>
          <ZoomSign>-</ZoomSign>
          <ZoomTrack />
          <ZoomSign>+</ZoomSign>
          <Percent>80 %</Percent>
        </ZoomPart>
      </Status>
      <BottomStrip />
      <Watermark>
        <WmTitle>Activate Windows</WmTitle>
        <WmSub>Go to Settings to activate Windows.</WmSub>
      </Watermark>
    </Window>
  );
}
